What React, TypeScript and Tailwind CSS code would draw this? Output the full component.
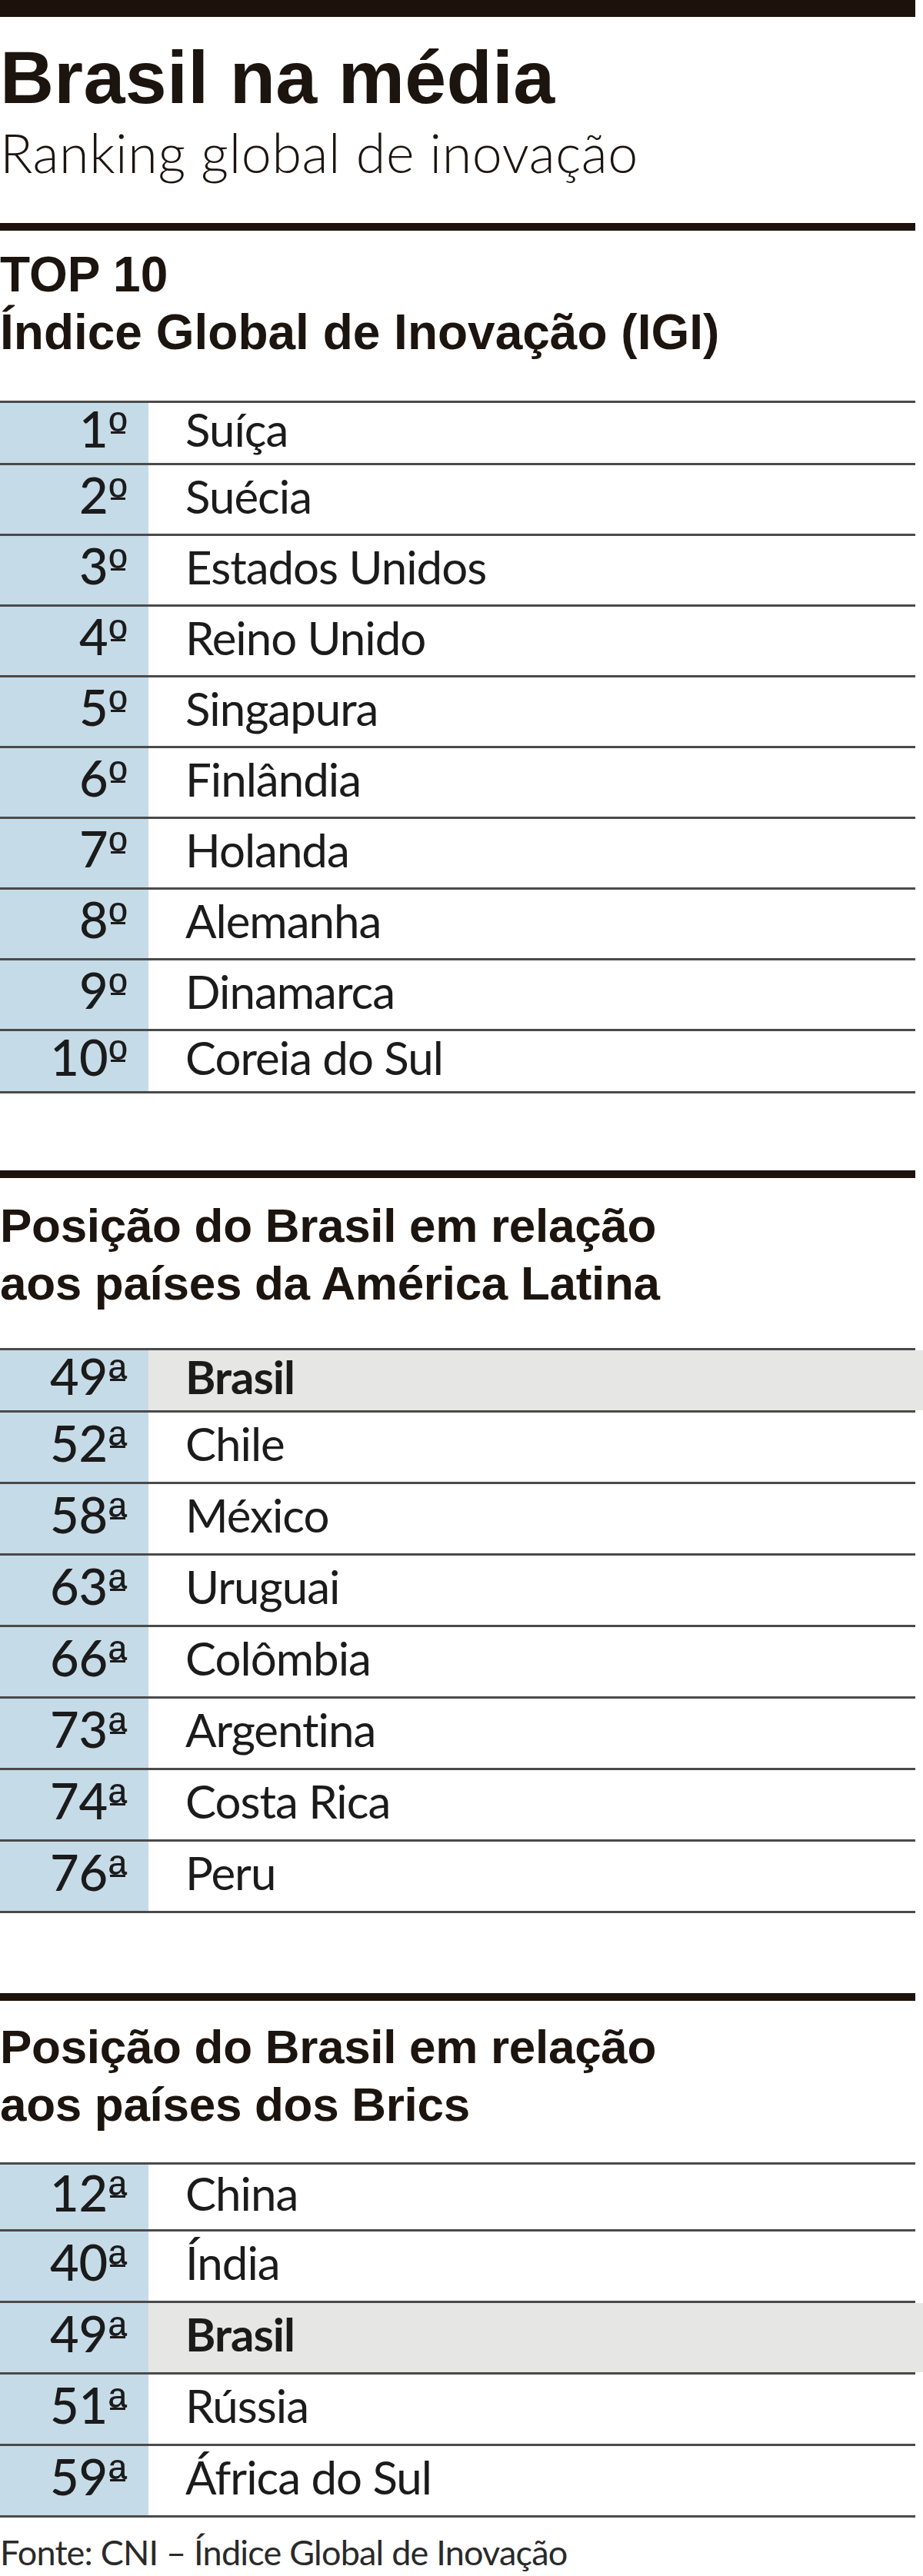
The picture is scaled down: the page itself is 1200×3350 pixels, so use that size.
const top10 = [
  { num: "1", ord: "º", name: "Suíça", h: "h-[81px]" },
  { num: "2", ord: "º", name: "Suécia", h: "h-[92px]" },
  { num: "3", ord: "º", name: "Estados Unidos", h: "h-[92px]" },
  { num: "4", ord: "º", name: "Reino Unido", h: "h-[92px]" },
  { num: "5", ord: "º", name: "Singapura", h: "h-[92px]" },
  { num: "6", ord: "º", name: "Finlândia", h: "h-[92px]" },
  { num: "7", ord: "º", name: "Holanda", h: "h-[92px]" },
  { num: "8", ord: "º", name: "Alemanha", h: "h-[92px]" },
  { num: "9", ord: "º", name: "Dinamarca", h: "h-[92px]" },
  { num: "10", ord: "º", name: "Coreia do Sul", h: "h-[81px]" },
];

const latam = [
  { num: "49", ord: "ª", name: "Brasil", h: "h-[81px]", hl: true },
  { num: "52", ord: "ª", name: "Chile", h: "h-[93px]" },
  { num: "58", ord: "ª", name: "México", h: "h-[93px]" },
  { num: "63", ord: "ª", name: "Uruguai", h: "h-[93px]" },
  { num: "66", ord: "ª", name: "Colômbia", h: "h-[93px]" },
  { num: "73", ord: "ª", name: "Argentina", h: "h-[93px]" },
  { num: "74", ord: "ª", name: "Costa Rica", h: "h-[93px]" },
  { num: "76", ord: "ª", name: "Peru", h: "h-[93px]" },
];

const brics = [
  { num: "12", ord: "ª", name: "China", h: "h-[87px]" },
  { num: "40", ord: "ª", name: "Índia", h: "h-[93px]" },
  { num: "49", ord: "ª", name: "Brasil", h: "h-[93px]", hl: true },
  { num: "51", ord: "ª", name: "Rússia", h: "h-[93px]" },
  { num: "59", ord: "ª", name: "África do Sul", h: "h-[93px]" },
];

type Item = { num: string; ord: string; name: string; h: string; hl?: boolean };

const lato = "font-['Lato','Liberation_Sans',sans-serif]";
const grot = "font-['Liberation_Sans','Arial',sans-serif]";

function Table({ rows, className }: { rows: Item[]; className: string }) {
  return (
    <div className={`border-t-[3px] border-[#4a4a4a] ${className}`}>
      {rows.map((r) => (
        <div
          key={r.num + r.name}
          className={`flex items-stretch border-b-[3px] border-[#4a4a4a] ${r.h}`}
        >
          <div className="flex w-[193px] shrink-0 items-center justify-end bg-[#c6dbe8] pb-[10px] pr-[28px] text-[#1b1b1b]">
            <span className={`text-[65px] leading-none font-medium ${lato}`}>
              {r.num}
              <span
                className={`relative ml-[1px] inline-block text-[64px] leading-none font-normal ${grot} after:absolute after:inset-x-[2px] after:top-[33px] after:h-[3px] after:bg-[#1b1b1b] after:content-['']`}
              >
                {r.ord}
              </span>
            </span>
          </div>
          <div
            className={`flex flex-1 items-center pb-[10px] pl-[48px] text-[60px] leading-none tracking-[-1px] text-[#1b1b1b] ${lato} ${
              r.hl ? "-mr-[10px] bg-[#e6e6e4] font-bold" : "font-normal"
            }`}
          >
            {r.name}
          </div>
        </div>
      ))}
    </div>
  );
}

function Heading({ lines, className }: { lines: string[]; className: string }) {
  return (
    <h2 className={`leading-[75px] font-bold text-[#1c140e] ${grot} ${className}`}>
      {lines.map((l) => (
        <div key={l}>{l}</div>
      ))}
    </h2>
  );
}

export default function App() {
  return (
    <div className="min-h-[3350px] w-[1200px] bg-white">
      <div className="w-[1190px]">
        <div className="h-[22px] bg-[#1c120b]" />
        <h1
          className={`mt-[30px] text-[97px] leading-none font-bold tracking-[0.3px] text-[#1c140e] ${grot}`}
        >
          Brasil na média
        </h1>
        <p
          className={`mt-[14px] text-[70px] leading-none font-light tracking-[0.6px] text-[#1c140e] ${lato}`}
        >
          Ranking global de inovação
        </p>

        <div className="mt-[57px] h-[10px] bg-[#1c120b]" />
        <Heading
          lines={["TOP 10", "Índice Global de Inovação (IGI)"]}
          className="mt-[20px] text-[64px]"
        />
        <Table rows={top10} className="mt-[51px]" />

        <div className="mt-[100px] h-[10px] bg-[#1c120b]" />
        <Heading
          lines={["Posição do Brasil em relação", "aos países da América Latina"]}
          className="mt-[24px] text-[62px] tracking-[-0.3px]"
        />
        <Table rows={latam} className="mt-[47px]" />

        <div className="mt-[104px] h-[10px] bg-[#1c120b]" />
        <Heading
          lines={["Posição do Brasil em relação", "aos países dos Brics"]}
          className="mt-[22px] text-[62px] tracking-[-0.3px]"
        />
        <Table rows={brics} className="mt-[38px]" />

        <p
          className={`mt-[23px] text-[45px] leading-none font-normal tracking-[-0.8px] text-[#2a2a2a] ${lato}`}
        >
          Fonte: CNI – Índice Global de Inovação
        </p>
      </div>
    </div>
  );
}
